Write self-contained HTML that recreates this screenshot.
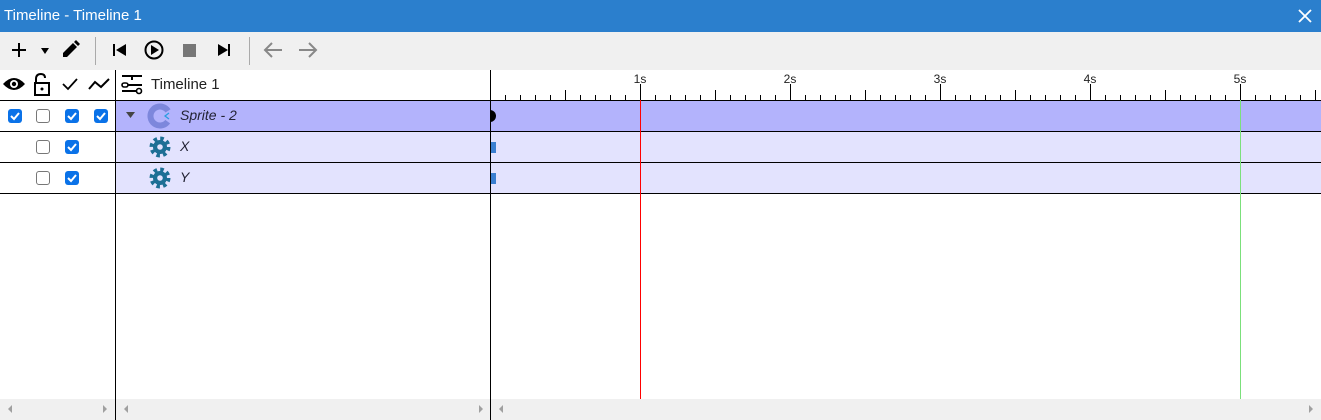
<!DOCTYPE html>
<html><head><meta charset="utf-8"><style>
body{margin:0;width:1321px;height:420px;overflow:hidden;background:#fff;font-family:"Segoe UI","Liberation Sans",sans-serif;position:relative}
.a{position:absolute}
.cb{position:absolute;width:14px;height:14px;border-radius:3px;box-sizing:border-box}
.on{background:#0a72e8}
.off{border:1px solid #777;background:#fff}
</style></head><body>
<div class="a" style="left:0;top:0;width:1321px;height:32px;background:#2b7fcd"></div>
<div class="a" style="left:4px;top:7px;color:#fff;font-size:15px">Timeline - Timeline 1</div>
<svg class="a" style="left:1298px;top:9px" width="14" height="14"><path d="M1 1L13 13M13 1L1 13" stroke="#fff" stroke-width="1.8"/></svg>
<div class="a" style="left:0;top:32px;width:1321px;height:38px;background:#f0f0f0"></div>
<svg class="a" style="left:0;top:32px" width="330" height="38">
<path d="M19 11V25M12 18H26" stroke="#000" stroke-width="2"/>
<path d="M41 16H49L45 22Z" fill="#000"/>
<path d="M63 25L63 21L73 11L77 15L67 25Z" fill="#000"/><path d="M74 10L76 8L80 12L78 14Z" fill="#000"/>
<rect x="95" y="5" width="1" height="28" fill="#aaa"/>
<rect x="113" y="12" width="2" height="12" fill="#000"/><path d="M126 12V24L116 18Z" fill="#000"/>
<circle cx="154" cy="18" r="8.5" fill="none" stroke="#000" stroke-width="2"/><path d="M151 13V23L159 18Z" fill="#000"/>
<rect x="183" y="12" width="13" height="13" fill="#777"/>
<path d="M218 12V24L228 18Z" fill="#000"/><rect x="228" y="12" width="2" height="12" fill="#000"/>
<rect x="249" y="5" width="1" height="28" fill="#aaa"/>
<path d="M282 18H265M272 11L265 18L272 25" stroke="#888" stroke-width="2" fill="none"/>
<path d="M299 18H316M309 11L316 18L309 25" stroke="#888" stroke-width="2" fill="none"/>
</svg>
<svg class="a" style="left:0;top:70px" width="116" height="30">
<path d="M3 14Q14 2 25 14Q14 26 3 14Z" fill="#000"/><circle cx="14" cy="14" r="4" fill="#fff"/><circle cx="14" cy="14" r="2.2" fill="#000"/>
<path d="M36 14V9Q36 4 41 4Q45 4 45 8" stroke="#000" stroke-width="2" fill="none"/><rect x="35" y="13" width="14" height="12" fill="none" stroke="#000" stroke-width="2"/><circle cx="42" cy="19" r="1.5" fill="#000"/>
<path d="M63 14L68 19L77 9" stroke="#000" stroke-width="1.8" fill="none"/>
<path d="M89 19L95 12L101 17L109 9" stroke="#000" stroke-width="2" fill="none"/>
</svg>
<svg class="a" style="left:120px;top:74px" width="26" height="24"><path d="M2 2H22M12 2V6" stroke="#000" stroke-width="2"/><rect x="2" y="9" width="6" height="4" rx="2" fill="none" stroke="#000" stroke-width="1.6"/><path d="M8 11H22" stroke="#000" stroke-width="2"/><path d="M2 17H16" stroke="#000" stroke-width="2"/><circle cx="19" cy="17" r="2.5" fill="none" stroke="#000" stroke-width="1.6"/></svg>
<div class="a" style="left:151px;top:76px;font-size:15px;color:#222">Timeline 1</div>
<div class="a" style="left:116px;top:101px;width:1205px;height:30px;background:#b3b3fc"></div>
<div class="a" style="left:116px;top:132px;width:1205px;height:30px;background:#e3e3fe"></div>
<div class="a" style="left:116px;top:163px;width:1205px;height:30px;background:#e3e3fe"></div>
<div class="a" style="left:0;top:100px;width:1321px;height:1px;background:#000"></div>
<div class="a" style="left:0;top:131px;width:1321px;height:1px;background:#000"></div>
<div class="a" style="left:0;top:162px;width:1321px;height:1px;background:#000"></div>
<div class="a" style="left:0;top:193px;width:1321px;height:1px;background:#000"></div>
<div class="cb on" style="left:8px;top:109px"></div><div class="cb off" style="left:36px;top:109px"></div><div class="cb on" style="left:65px;top:109px"></div><div class="cb on" style="left:94px;top:109px"></div>
<div class="cb off" style="left:36px;top:140px"></div><div class="cb on" style="left:65px;top:140px"></div>
<div class="cb off" style="left:36px;top:171px"></div><div class="cb on" style="left:65px;top:171px"></div>
<svg class="a" style="left:0;top:100px" width="116" height="94">
<g stroke="#fff" stroke-width="2" fill="none"><path d="M11 16L14 19L19 13"/><path d="M68 16L71 19L76 13"/><path d="M97 16L100 19L105 13"/><path d="M68 47L71 50L76 44"/><path d="M68 78L71 81L76 75"/></g></svg>
<svg class="a" style="left:120px;top:101px" width="120" height="92">
<path d="M6 11H15L10.5 17Z" fill="#444"/>
<circle cx="40" cy="15" r="9.5" fill="none" stroke="#7d87dc" stroke-width="6" stroke-dasharray="48 12" transform="rotate(36 40 15)"/>
<path d="M49 12L45 15L49 18" stroke="#2a9de0" stroke-width="1.3" fill="none"/>
<g fill="#1d6f95"><circle cx="40" cy="46" r="7"/><circle cx="40" cy="77" r="7"/></g>
<g stroke="#1d6f95" stroke-width="4" stroke-dasharray="3.5 3.17"><circle cx="40" cy="46" r="8.5" fill="none"/><circle cx="40" cy="77" r="8.5" fill="none"/></g>
<g fill="#e3e3fe"><circle cx="40" cy="46" r="2.8"/><circle cx="40" cy="77" r="2.8"/></g>
</svg>
<div class="a" style="left:180px;top:107px;font-size:14px;font-style:italic;color:#223">Sprite - 2</div>
<div class="a" style="left:180px;top:138px;font-size:14px;font-style:italic;color:#223">X</div>
<div class="a" style="left:180px;top:169px;font-size:14px;font-style:italic;color:#223">Y</div>
<svg class="a" style="left:490px;top:70px" width="831" height="330">
<g id="t" stroke="#000" stroke-width="1"></g>
<g font-size="12" fill="#222" font-family="Segoe UI,Liberation Sans,sans-serif" text-anchor="middle">
<text x="150" y="13">1s</text><text x="300" y="13">2s</text><text x="450" y="13">3s</text><text x="600" y="13">4s</text><text x="750" y="13">5s</text></g>
<path d="M0 40A6 6 0 0 1 0 52Z" fill="#000"/>
<rect x="0" y="72" width="6" height="11" fill="#3a7fd0"/><rect x="0" y="103" width="6" height="11" fill="#3a7fd0"/>
<rect x="150" y="30" width="1" height="300" fill="#f00"/>
<rect x="750" y="30" width="1" height="300" fill="#7be07b"/>
</svg>
<script>
var g=document.getElementById('t'),s='';
for(var i=1;i<56;i++){var x=i*15+0.5;var h=i%10==0?16:(i%5==0?10:5);s+='<line x1="'+x+'" x2="'+x+'" y1="'+(30-h)+'" y2="30"/>';}
g.innerHTML=s;
</script>
<div class="a" style="left:115px;top:70px;width:1px;height:350px;background:#000"></div>
<div class="a" style="left:490px;top:70px;width:1px;height:350px;background:#000"></div>
<div class="a" style="left:0;top:399px;width:115px;height:21px;background:#f0f0f0"></div>
<div class="a" style="left:116px;top:399px;width:374px;height:21px;background:#f0f0f0"></div>
<div class="a" style="left:491px;top:399px;width:830px;height:21px;background:#f0f0f0"></div>
<svg class="a" style="left:0;top:399px" width="1321" height="21"><g fill="#a0a0a0">
<path d="M8 10L12 6V14Z"/><path d="M107 10L103 6V14Z"/><path d="M124 10L128 6V14Z"/><path d="M483 10L479 6V14Z"/><path d="M499 10L503 6V14Z"/><path d="M1313 10L1309 6V14Z"/></g></svg>
</body></html>
